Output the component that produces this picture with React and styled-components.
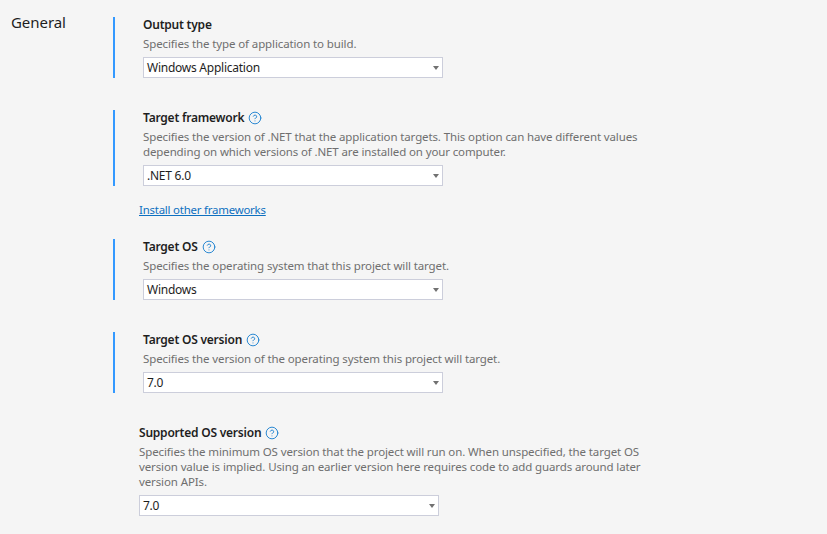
import React from "react";
import styled, { createGlobalStyle } from "styled-components";
import { CircleHelp } from "lucide-react";

const Global = createGlobalStyle`
  html, body { margin: 0; padding: 0; background: #f5f5f5; }
  body { font-family: "Noto Sans", "Open Sans", sans-serif; overflow: hidden; }
`;

const Page = styled.div`
  width: 827px;
  height: 534px;
  display: flex;
  background: #f5f5f5;
  overflow: hidden;
`;

const Heading = styled.h2`
  width: 102px;
  margin: 0;
  padding: 12px 0 0 11px;
  font-size: 15px;
  line-height: 20px;
  letter-spacing: -0.05px;
  font-weight: 400;
  color: #1e1e1e;
  box-sizing: content-box;
`;

const Column = styled.div`
  padding-top: 17px;
  display: flex;
  flex-direction: column;
  align-items: flex-start;
`;

const Section = styled.section`
  width: 520px;
  box-sizing: content-box;
  margin-bottom: ${(p) => p.$gap}px;
  border-left: 2px solid ${(p) => (p.$plain ? "transparent" : "#3399ff")};
  padding-left: ${(p) => (p.$plain ? 24 : 28)}px;
`;

const Title = styled.div`
  display: flex;
  align-items: center;
  gap: 4px;
  height: 16px;
  margin-bottom: 3px;
  font-size: 12px;
  line-height: 16px;
  letter-spacing: -0.22px;
  font-weight: 600;
  color: #1e1e1e;
`;

const Help = styled(CircleHelp)`
  width: 14px;
  height: 14px;
  color: #1b80d0;
  flex: none;
`;

const Description = styled.p`
  margin: 0 0 ${(p) => (p.$last ? 6 : 0)}px;
  font-size: 11.5px;
  line-height: 15px;
  letter-spacing: -0.12px;
  color: #6f6f6f;
  white-space: nowrap;
`;

const Select = styled.div`
  width: 300px;
  height: 21px;
  box-sizing: border-box;
  display: flex;
  align-items: center;
  justify-content: space-between;
  padding: 0 3px 0 3px;
  background: #fff;
  border: 1px solid #cccedb;
  font-size: 12px;
  letter-spacing: -0.25px;
  color: #1e1e1e;
`;

const Caret = styled.span`
  width: 0;
  height: 0;
  margin-top: 1px;
  border-left: 3.5px solid transparent;
  border-right: 3.5px solid transparent;
  border-top: 4px solid #717171;
`;

const Link = styled.a`
  margin: 16px 0 21px 26px;
  font-size: 11.4px;
  line-height: 16px;
  letter-spacing: -0.2px;
  color: #0e70c0;
  text-decoration: underline;
`;

const Field = ({ title, help, lines, value, gap, plain }) => (
  <Section $gap={gap} $plain={plain}>
    <Title>
      {title}
      {help && <Help strokeWidth={1.6} />}
    </Title>
    {lines.map((line, i) => (
      <Description key={i} $last={i === lines.length - 1}>
        {line}
      </Description>
    ))}
    <Select>
      {value}
      <Caret />
    </Select>
  </Section>
);

export default function App() {
  return (
    <Page>
      <Global />
      <Heading>General</Heading>
      <Column>
        <Field
          title="Output type"
          lines={["Specifies the type of application to build."]}
          value="Windows Application"
          gap={32}
        />
        <Field
          title="Target framework"
          help
          lines={[
            "Specifies the version of .NET that the application targets. This option can have different values",
            "depending on which versions of .NET are installed on your computer.",
          ]}
          value=".NET 6.0"
          gap={0}
        />
        <Link href="#">Install other frameworks</Link>
        <Field
          title="Target OS"
          help
          lines={["Specifies the operating system that this project will target."]}
          value="Windows"
          gap={32}
        />
        <Field
          title="Target OS version"
          help
          lines={["Specifies the version of the operating system this project will target."]}
          value="7.0"
          gap={32}
        />
        <Field
          title="Supported OS version"
          help
          plain
          lines={[
            "Specifies the minimum OS version that the project will run on. When unspecified, the target OS",
            "version value is implied. Using an earlier version here requires code to add guards around later",
            "version APIs.",
          ]}
          value="7.0"
          gap={0}
        />
      </Column>
    </Page>
  );
}
